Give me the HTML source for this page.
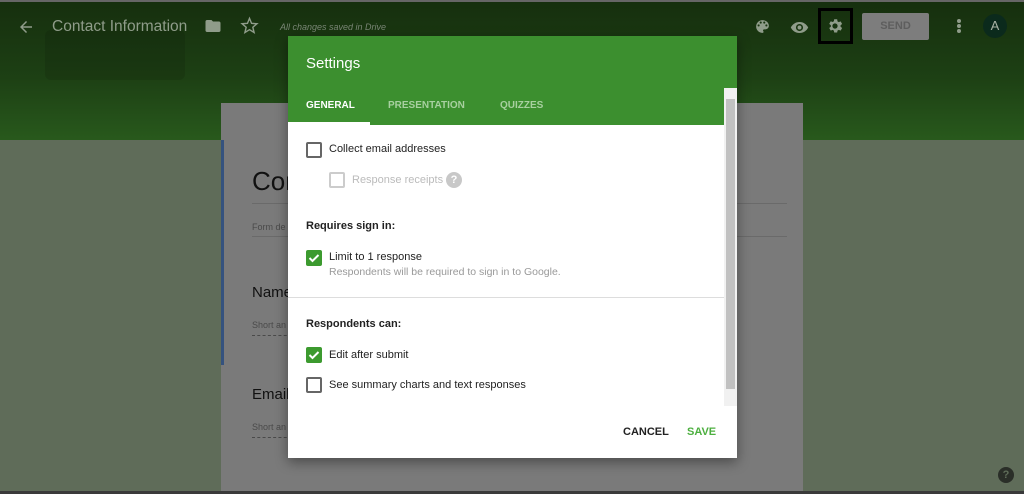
<!DOCTYPE html>
<html style="overflow:hidden;width:1024px;height:494px"><head><style>
*{margin:0;padding:0;box-sizing:border-box}
body{width:1024px;height:494px;overflow:hidden;position:relative;font-family:"Liberation Sans",Arial,sans-serif;background:#5f6c59}
.abs{position:absolute}
.hdr{left:0;top:0;width:1024px;height:140px;background:linear-gradient(180deg,#162f0e 0%,#1d4014 55%,#28591c 100%);border-top:2px solid #666}
.card{left:221px;top:103px;width:582px;height:391px;background:#7a7a7a}
.cb{width:16px;height:16px;border:2px solid #666;border-radius:2px;background:#fff}
.cbc{width:16px;height:16px;background:#3c9a2f;border-radius:2px}
.t{font-size:11px;color:#222}
</style></head><body>
<div class="abs hdr"></div>
<div class="abs" style="left:45px;top:30px;width:140px;height:50px;background:rgba(0,0,0,.1);border-radius:6px"></div>
<svg class="abs" style="left:17px;top:18px" width="18" height="18" viewBox="0 0 24 24"><path d="M20 11H7.8l5.6-5.6L12 4l-8 8 8 8 1.4-1.4L7.8 13H20z" fill="#8f9c8a"/></svg>
<div class="abs" style="left:52px;top:18px;font-size:15.5px;color:#8f9c8a">Contact Information</div>
<svg class="abs" style="left:204px;top:17px" width="18" height="18" viewBox="0 0 24 24"><path d="M10 4H4c-1.1 0-2 .9-2 2v12c0 1.1.9 2 2 2h16c1.1 0 2-.9 2-2V8c0-1.1-.9-2-2-2h-8z" fill="#8f9c8a"/></svg>
<svg class="abs" style="left:240px;top:16px" width="19" height="19" viewBox="0 0 24 24"><path d="M12 3l2.6 6.3 6.8.5-5.2 4.4 1.6 6.6L12 17.3 6.2 20.8l1.6-6.6L2.6 9.8l6.8-.5z" fill="none" stroke="#8f9c8a" stroke-width="1.8"/></svg>
<div class="abs" style="left:280px;top:22px;font-size:9px;font-style:italic;color:#7a8676">All changes saved in Drive</div>
<svg class="abs" style="left:754px;top:18px" width="17" height="17" viewBox="0 0 24 24"><path d="M12 3a9 9 0 000 18c.8 0 1.5-.7 1.5-1.5 0-.4-.1-.7-.4-1-.2-.3-.4-.6-.4-1 0-.8.7-1.5 1.5-1.5H16c2.8 0 5-2.2 5-5C21 6.6 17 3 12 3zM6.5 12a1.5 1.5 0 110-3 1.5 1.5 0 010 3zm3-4a1.5 1.5 0 110-3 1.5 1.5 0 010 3zm5 0a1.5 1.5 0 110-3 1.5 1.5 0 010 3zm3 4a1.5 1.5 0 110-3 1.5 1.5 0 010 3z" fill="#8f9c8a"/></svg>
<svg class="abs" style="left:790px;top:18px" width="19" height="19" viewBox="0 0 24 24"><path d="M12 5C7 5 3 8 1 12c2 4 6 7 11 7s9-3 11-7c-2-4-6-7-11-7zm0 11.5a4.5 4.5 0 110-9 4.5 4.5 0 010 9zm0-7a2.5 2.5 0 100 5 2.5 2.5 0 000-5z" fill="#8f9c8a"/></svg>
<div class="abs" style="left:818px;top:8px;width:35px;height:36px;border:3px solid #000"></div>
<svg class="abs" style="left:826px;top:17px" width="18" height="18" viewBox="0 0 24 24"><path d="M19.4 13a7.5 7.5 0 000-2l2.1-1.6-2-3.5-2.5 1a7 7 0 00-1.7-1L14.9 3h-4l-.4 2.6a7 7 0 00-1.7 1l-2.5-1-2 3.5L6.5 11a7.5 7.5 0 000 2l-2.2 1.6 2 3.5 2.5-1a7 7 0 001.7 1l.4 2.6h4l.4-2.6a7 7 0 001.7-1l2.5 1 2-3.5zM12 15.5a3.5 3.5 0 110-7 3.5 3.5 0 010 7z" fill="#8f9c8a"/></svg>
<div class="abs" style="left:862px;top:13px;width:67px;height:27px;background:#7d7d7d;border-radius:2px;color:#5e5e5e;font-size:11px;font-weight:bold;text-align:center;line-height:27px">SEND</div>
<div class="abs" style="left:957px;top:19px;width:4px;height:4px;border-radius:2px;background:#8f9c8a;box-shadow:0 5px 0 #8f9c8a,0 10px 0 #8f9c8a"></div>
<div class="abs" style="left:983px;top:14px;width:24px;height:24px;border-radius:12px;background:#0b2a1c;color:#a8b2a4;font-size:13px;text-align:center;line-height:24px">A</div>

<div class="abs card"></div>
<div class="abs" style="left:221px;top:140px;width:3px;height:225px;background:#34527e"></div>
<div class="abs" style="left:252px;top:166px;font-size:26px;color:#111">Con</div>
<div class="abs" style="left:252px;top:203px;width:535px;height:1px;background:#6a6a6a"></div>
<div class="abs" style="left:252px;top:222px;font-size:9px;color:#4a4a4a">Form de</div>
<div class="abs" style="left:252px;top:236px;width:535px;height:1px;background:#6a6a6a"></div>
<div class="abs" style="left:252px;top:284px;font-size:15px;color:#111">Name</div>
<div class="abs" style="left:252px;top:320px;font-size:9px;color:#4a4a4a">Short an</div>
<div class="abs" style="left:252px;top:335px;width:40px;border-top:1px dashed #4a4a4a"></div>
<div class="abs" style="left:252px;top:386px;font-size:15px;color:#111">Email</div>
<div class="abs" style="left:252px;top:422px;font-size:9px;color:#4a4a4a">Short an</div>
<div class="abs" style="left:252px;top:437px;width:40px;border-top:1px dashed #4a4a4a"></div>
<div class="abs" style="left:0;top:491px;width:1024px;height:3px;background:#3a3a3a"></div>
<div class="abs" style="left:998px;top:467px;width:16px;height:16px;border-radius:8px;background:#2a2e28;color:#5f6c59;font-size:11px;font-weight:bold;text-align:center;line-height:16px">?</div>

<div class="abs" style="left:288px;top:36px;width:449px;height:422px;background:#fff;box-shadow:0 4px 12px rgba(0,0,0,.4)">
 <div style="height:89px;background:#3c8f2f;position:relative">
  <div class="abs" style="left:18px;top:19px;font-size:15px;color:#fff">Settings</div>
  <div class="abs" style="left:18px;top:64px;font-size:10px;color:#fff;font-weight:bold">GENERAL</div>
  <div class="abs" style="left:100px;top:64px;font-size:10px;color:#a8d0a0;font-weight:bold">PRESENTATION</div>
  <div class="abs" style="left:212px;top:64px;font-size:10px;color:#a8d0a0;font-weight:bold">QUIZZES</div>
  <div class="abs" style="left:0;top:86px;width:82px;height:3px;background:#fff"></div>
 </div>
 <div class="abs" style="left:436px;top:52px;width:13px;height:318px;background:#f1f1f1"><div style="margin:11px 2px 0;height:290px;background:#c1c1c1"></div></div>
 <div class="abs cb" style="left:18px;top:106px"></div><div class="abs t" style="left:41px;top:107px">Collect email addresses</div>
 <div class="abs cb" style="left:41px;top:136px;border-color:#ccc"></div><div class="abs t" style="left:64px;top:138px;color:#bbb">Response receipts</div>
 <div class="abs" style="left:158px;top:136px;width:16px;height:16px;border-radius:8px;background:#c8c8c8;color:#fff;font-size:11px;font-weight:bold;text-align:center;line-height:16px">?</div>
 <div class="abs t" style="left:18px;top:184px;font-weight:bold">Requires sign in:</div>
 <div class="abs cbc" style="left:18px;top:214px"><svg width="16" height="16" viewBox="0 0 16 16"><path d="M3.5 8l3 3 6-6" fill="none" stroke="#fff" stroke-width="2"/></svg></div>
 <div class="abs t" style="left:41px;top:215px">Limit to 1 response</div>
 <div class="abs" style="left:41px;top:230px;font-size:10.5px;color:#999">Respondents will be required to sign in to Google.</div>
 <div class="abs" style="left:0;top:261px;width:436px;height:1px;background:#ddd"></div>
 <div class="abs t" style="left:18px;top:282px;font-weight:bold">Respondents can:</div>
 <div class="abs cbc" style="left:18px;top:311px"><svg width="16" height="16" viewBox="0 0 16 16"><path d="M3.5 8l3 3 6-6" fill="none" stroke="#fff" stroke-width="2"/></svg></div>
 <div class="abs t" style="left:41px;top:313px">Edit after submit</div>
 <div class="abs cb" style="left:18px;top:341px"></div><div class="abs t" style="left:41px;top:343px">See summary charts and text responses</div>
 <div class="abs" style="left:335px;top:390px;font-size:11px;font-weight:bold;color:#222">CANCEL</div>
 <div class="abs" style="left:399px;top:390px;font-size:11px;font-weight:bold;color:#4caf3f">SAVE</div>
</div>
</body></html>
